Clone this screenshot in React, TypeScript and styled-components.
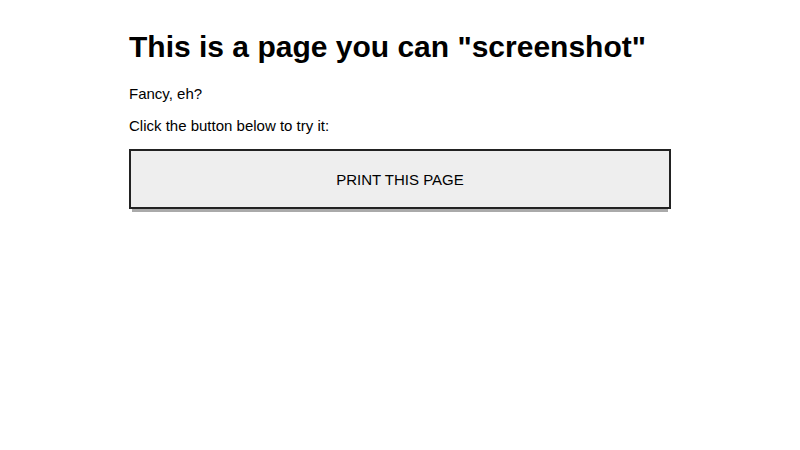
import React from 'react';
import styled, { createGlobalStyle } from 'styled-components';

const GlobalStyle = createGlobalStyle`
  html, body {
    margin: 0;
    background: #fff;
    color: #000;
    font-family: "Liberation Sans", Arial, sans-serif;
  }
`;

const Page = styled.main`
  max-width: 542px;
  margin: 0 auto;
  padding-top: 8px;
`;

const Title = styled.h1`
  font-size: 30px;
  font-weight: bold;
  margin: 22px 0 21px;
`;

const Text = styled.p`
  font-size: 15px;
  margin: 15px 0;
`;

const ButtonFrame = styled.div`
  margin-top: 15px;
`;

const PrintButton = styled.button`
  appearance: none;
  display: block;
  box-sizing: border-box;
  width: 100%;
  height: 60px;
  padding: 0;
  border: 2px solid #222;
  border-radius: 0;
  background: #eee;
  color: #000;
  font-family: "Liberation Sans", Arial, sans-serif;
  font-size: 15px;
  text-transform: uppercase;
  cursor: pointer;
`;

const ButtonShadow = styled.div`
  height: 3px;
  margin: 0 3px;
  background: #aaa;
`;

export default function App() {
  return (
    <>
      <GlobalStyle />
      <Page>
        <Title>This is a page you can "screenshot"</Title>
        <Text>Fancy, eh?</Text>
        <Text>Click the button below to try it:</Text>
        <ButtonFrame>
          <PrintButton onClick={() => window.print()}>Print this page</PrintButton>
          <ButtonShadow />
        </ButtonFrame>
      </Page>
    </>
  );
}
